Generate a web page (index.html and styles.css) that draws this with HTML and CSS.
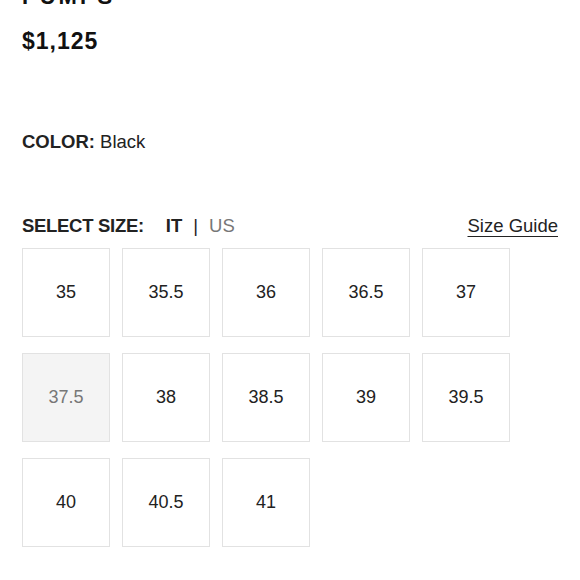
FILE: index.html
```html
<!DOCTYPE html>
<html>
<head>
<meta charset="utf-8">
<link rel="stylesheet" href="styles.css">
</head>
<body>
<div class="product">
  <h1 class="title">PUMPS</h1>
  <div class="price">$1,125</div>
  <div class="color"><span class="label">COLOR:</span> Black</div>
  <div class="size-head">
    <div class="size-select">
      <span class="label">SELECT SIZE:</span>
      <span class="unit active">IT</span>
      <span class="sep">|</span>
      <span class="unit">US</span>
    </div>
    <a class="guide" href="#">Size Guide</a>
  </div>
  <div class="sizes">
    <div class="size">35</div>
    <div class="size">35.5</div>
    <div class="size">36</div>
    <div class="size">36.5</div>
    <div class="size">37</div>
    <div class="size disabled">37.5</div>
    <div class="size">38</div>
    <div class="size">38.5</div>
    <div class="size">39</div>
    <div class="size">39.5</div>
    <div class="size">40</div>
    <div class="size">40.5</div>
    <div class="size">41</div>
  </div>
</div>
</body>
</html>
```
FILE: styles.css
```css
html, body {
  margin: 0;
  padding: 0;
  background: #fff;
}
body {
  font-family: "Liberation Sans", Arial, sans-serif;
  color: #111;
  overflow: hidden;
}
.product {
  padding: 0 22px;
}
.title {
  margin: -16px 0 0 0;
  font-size: 22px;
  line-height: 26px;
  font-weight: bold;
  letter-spacing: 3px;
}
.price {
  margin-top: 16px;
  font-size: 23px;
  line-height: 30px;
  font-weight: bold;
  letter-spacing: 1px;
}
.color {
  margin-top: 74px;
  font-size: 18.5px;
  line-height: 24px;
  color: #222;
}
.label {
  font-weight: bold;
}
.size-head {
  margin-top: 60px;
  display: flex;
  justify-content: space-between;
  align-items: baseline;
  font-size: 18.5px;
  line-height: 24px;
  color: #222;
}
.size-select {
  display: flex;
  align-items: baseline;
}
.size-select .label {
  margin-right: 22px;
  letter-spacing: -0.3px;
}
.unit {
  color: #777;
}
.unit.active {
  color: #222;
  font-weight: bold;
}
.sep {
  margin: 0 11px;
  color: #222;
}
.guide {
  color: #222;
  text-decoration: underline;
  text-underline-offset: 4px;
  text-decoration-thickness: 1px;
}
.sizes {
  margin-top: 10px;
  display: grid;
  grid-template-columns: repeat(5, 88px);
  grid-auto-rows: 89px;
  column-gap: 12px;
  row-gap: 16px;
}
.size {
  box-sizing: border-box;
  border: 1.5px solid #e2e2e2;
  display: flex;
  align-items: center;
  justify-content: center;
  font-size: 18px;
  color: #222;
}
.size.disabled {
  background: #f4f4f4;
  color: #777;
}
```
